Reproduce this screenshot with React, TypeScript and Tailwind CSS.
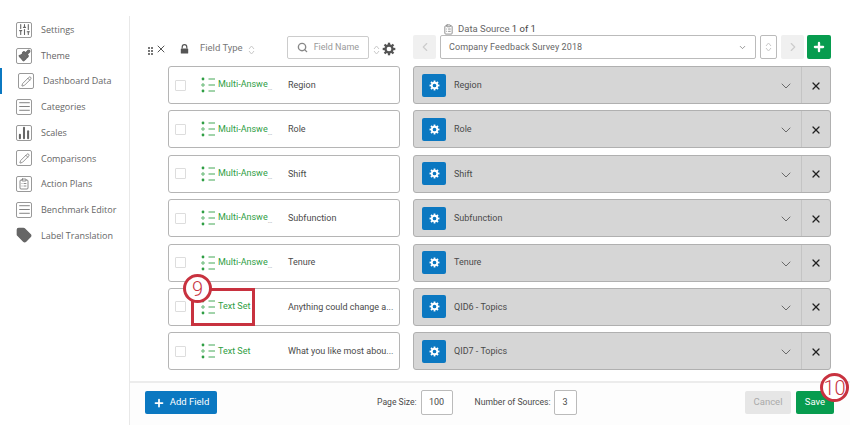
import React from 'react';
import { ChevronDown, ChevronLeft, ChevronRight, Plus, Search, X, Tag, Paintbrush, Pencil, ClipboardList, SlidersVertical, ChartNoAxesColumn, AlignJustify } from 'lucide-react';

const navItems = [
  { label: 'Settings', icon: <SlidersVertical size={13} />, boxed: true },
  { label: 'Theme', icon: <Paintbrush size={13} fill="#6b6b6b" />, boxed: true },
  { label: 'Dashboard Data', icon: <Pencil size={11} strokeWidth={1.5} />, boxed: true, active: true },
  { label: 'Categories', icon: <AlignJustify size={13} strokeWidth={1.5} />, boxed: true },
  { label: 'Scales', icon: <ChartNoAxesColumn size={14} strokeWidth={3.5} />, boxed: true },
  { label: 'Comparisons', icon: <Pencil size={11} strokeWidth={1.5} />, boxed: true },
  { label: 'Action Plans', icon: <ClipboardList size={12} strokeWidth={1.5} />, boxed: true },
  { label: 'Benchmark Editor', icon: <AlignJustify size={13} strokeWidth={1.5} />, boxed: true },
  { label: 'Label Translation', icon: <Tag size={16} fill="#666" />, boxed: false },
];

const rows = [
  { type: 'Multi-Answe', more: true, name: 'Region', source: 'Region' },
  { type: 'Multi-Answe', more: true, name: 'Role', source: 'Role' },
  { type: 'Multi-Answe', more: true, name: 'Shift', source: 'Shift' },
  { type: 'Multi-Answe', more: true, name: 'Subfunction', source: 'Subfunction' },
  { type: 'Multi-Answe', more: true, name: 'Tenure', source: 'Tenure' },
  { type: 'Text Set', more: false, name: 'Anything could change a...', source: 'QID6 - Topics' },
  { type: 'Text Set', more: false, name: 'What you like most abou...', source: 'QID7 - Topics' },
];

const ListGlyph = () => (
  <svg width="15" height="16" viewBox="0 0 15 16" className="shrink-0">
    <circle cx="2" cy="2" r="1.4" fill="#2f9e44" />
    <circle cx="2" cy="8" r="1.2" fill="none" stroke="#2f9e44" strokeWidth="0.8" />
    <circle cx="2" cy="14" r="1.4" fill="#2f9e44" />
    <path d="M7.5 2h6.5M7.5 8h6.5M7.5 14h6.5" stroke="#2f9e44" strokeWidth="0.9" />
  </svg>
);

const SortGlyph = () => (
  <svg width="7" height="10" viewBox="0 0 7 10" fill="none" stroke="#c9c9c9" strokeWidth="1">
    <path d="M1 4l2.5-3L6 4M1 6l2.5 3L6 6" />
  </svg>
);

// solid gear, used on the blue source buttons and the header
const GearGlyph = ({ size, color }: { size: number; color: string }) => (
  <svg width={size} height={size} viewBox="0 0 16 16" className="shrink-0">
    <circle cx="8" cy="8" r="4" fill="none" stroke={color} strokeWidth="2.6" />
    {[0, 45, 90, 135, 180, 225, 270, 315].map(a => (
      <rect key={a} x="6.7" y="0.8" width="2.6" height="3" fill={color} transform={`rotate(${a} 8 8)`} />
    ))}
  </svg>
);

const LockGlyph = () => (
  <svg width="9" height="10" viewBox="0 0 9 10" className="shrink-0">
    <path d="M2.2 4.5V3a2.3 2.3 0 0 1 4.6 0v1.5" fill="none" stroke="#555" strokeWidth="1.2" />
    <rect x="0.8" y="4.5" width="7.4" height="5" rx="0.6" fill="#555" />
  </svg>
);

const Step = ({ n, className }: { n: string; className: string }) => (
  <div className={`absolute flex h-[29px] w-[29px] items-center justify-center rounded-full border-[3px] border-[#c8323f] bg-white text-[20px] font-light leading-none text-[#c8323f] ${className}`}>
    {n}
  </div>
);

export default function App() {
  return (
    <div className="relative flex h-[425px] w-[850px] overflow-hidden whitespace-nowrap bg-white font-['Roboto',sans-serif] text-[#4a4a4a]">
      <aside className="relative h-full w-[129px] shrink-0 pt-[17px] font-['Open_Sans',sans-serif]">
        {navItems.map(item => (
          <div key={item.label} className={`flex h-[25.7px] items-center gap-[9px] pl-[16px] text-[9px] text-[#666] ${item.active ? 'border-l-[2px] border-[#0b78c1]' : ''}`}>
            <span className={`flex h-[16px] w-[16px] items-center justify-center text-[#666] ${item.boxed ? 'rounded-[2px] border border-[#999]' : ''}`}>
              {item.icon}
            </span>
            <span>{item.label}</span>
          </div>
        ))}
      </aside>

      <main className="mt-[16px] flex min-w-0 flex-1 flex-col border-l border-[#e8e8e8]">
        <div className="flex h-[50px] shrink-0">
          <div className="flex w-[283px] shrink-0 items-end pb-[7px] pl-[18px]">
            <span className="mb-[4px] grid grid-cols-2 gap-[1px]">
              {[0, 1, 2, 3, 4, 5].map(i => <i key={i} className="h-[2px] w-[2px] bg-[#777]" />)}
            </span>
            <X size={12} className="mb-[4px] ml-[2px] text-[#555]" />
            <span className="mb-[5px] ml-[13px]"><LockGlyph /></span>
            <span className="mb-[4px] ml-[11px] text-[9.5px] text-[#777]">Field Type</span>
            <span className="mb-[4px] ml-[5px]"><SortGlyph /></span>
            <div className="ml-[32px] flex h-[23px] w-[82px] items-center gap-[6px] rounded-[2px] border border-[#ccc] pl-[9px] text-[9px] text-[#999]">
              <Search size={11} className="text-[#888]" strokeWidth={3} />
              Field Name
            </div>
            <span className="mb-[4px] ml-[4px]"><SortGlyph /></span>
            <span className="mb-[3px] ml-[2px]"><GearGlyph size={14} color="#555" /></span>
          </div>
          <div className="flex w-[421px] flex-col pt-[2px]">
            <div className="flex h-[17px] items-center pl-[30px] pt-[5px] text-[9.5px] text-[#666]">
              <ClipboardList size={11} className="mr-[4px] text-[#888]" />
              Data Source&nbsp;<span className="text-[#444]">1 of 1</span>
            </div>
            <div className="flex h-[24px] items-center gap-[4px]">
              <span className="flex h-[24px] w-[23px] items-center justify-center rounded-[2px] bg-[#f0f0f0] text-[#ccc]"><ChevronLeft size={14} /></span>
              <div className="flex h-[24px] w-[316px] items-center justify-between rounded-[2px] border border-[#bbb] pl-[8px] pr-[8px] pt-[1px] text-[9px] tracking-[0.1px] text-[#666]">
                Company Feedback Survey 2018
                <ChevronDown size={9} className="text-[#777]" />
              </div>
              <span className="flex h-[24px] w-[17px] items-center justify-center rounded-[2px] border border-[#bbb]"><SortGlyph /></span>
              <span className="flex h-[24px] w-[23px] items-center justify-center rounded-[2px] bg-[#f0f0f0] text-[#ccc]"><ChevronRight size={14} /></span>
              <span className="-ml-[1px] flex h-[24px] w-[24px] items-center justify-center rounded-[2px] bg-[#079c4f] text-white"><Plus size={14} strokeWidth={4} /></span>
            </div>
          </div>
        </div>

        <div className="flex flex-1 flex-col gap-[6.4px] pl-[38px]">
          {rows.map(row => (
            <div key={row.name} className="flex h-[38px] shrink-0 gap-[13px]">
              <div className="flex w-[232px] items-center rounded-[3px] border border-[#b5b5b5] pl-[6px] text-[9px]">
                <span className="h-[11px] w-[11px] rounded-[1px] border border-[#ddd]" />
                <span className="ml-[15px] flex"><ListGlyph /></span>
                <span className="ml-[2px] w-[70px] text-[9px] text-[#2f9e44]">
                  {row.type}
                  {row.more && <span className="relative top-[3px] text-[6px] text-[#555]">...</span>}
                </span>
                <span className="pt-[1px] text-[#4a4a4a]">{row.name}</span>
              </div>
              <div className="flex w-[418px] items-center rounded-[3px] border border-[#b0b0b0] bg-[#d6d6d6] text-[9px]">
                <span className="ml-[8px] flex h-[23px] w-[24px] items-center justify-center rounded-[2px] bg-[#0b78c1]"><GearGlyph size={11} color="#fff" /></span>
                <span className="ml-[8px] flex-1 pt-[1px]">{row.source}</span>
                <ChevronDown size={16} strokeWidth={1} className="mr-[7px] mt-[2px] text-[#333]" />
                <span className="flex h-full w-[29px] items-center justify-center border-l border-[#c4c4c4] pt-[1px] text-[#222]"><X size={12} strokeWidth={2.5} /></span>
              </div>
            </div>
          ))}
        </div>

        <footer className="flex h-[44px] shrink-0 items-center border-t-[2px] border-[#ececec] bg-[#fdfdfd] pb-[3px] pl-[15px] pr-[16px] text-[8.6px]">
          <button className="flex h-[23px] w-[72px] items-center justify-center gap-[5px] rounded-[2px] bg-[#0b78c1] text-[9.5px] text-white">
            <Plus size={12} strokeWidth={3.5} />
            Add Field
          </button>
          <span className="ml-[160px]">Page Size:</span>
          <span className="ml-[4px] flex h-[25px] w-[32px] items-center justify-center rounded-[2px] border border-[#bbb] bg-white text-[9px]">100</span>
          <span className="ml-[22px]">Number of Sources:</span>
          <span className="ml-[3px] flex h-[25px] w-[23px] items-center justify-center rounded-[2px] border border-[#bbb] bg-white text-[9px]">3</span>
          <button className="ml-auto flex h-[23px] w-[46px] items-center justify-center rounded-[2px] bg-[#e6e6e6] text-[9.5px] text-[#aaa]">Cancel</button>
          <button className="ml-[5px] flex h-[23px] w-[38px] items-center justify-center rounded-[2px] bg-[#079c4f] text-[9.5px] text-white">Save</button>
        </footer>
      </main>

      <div className="absolute left-[191px] top-[288px] h-[38px] w-[64px] border-[3px] border-[#c8323f]" />
      <Step n="9" className="left-[183px] top-[274px]" />
      <Step n="10" className="left-[820px] top-[373px]" />
    </div>
  );
}
